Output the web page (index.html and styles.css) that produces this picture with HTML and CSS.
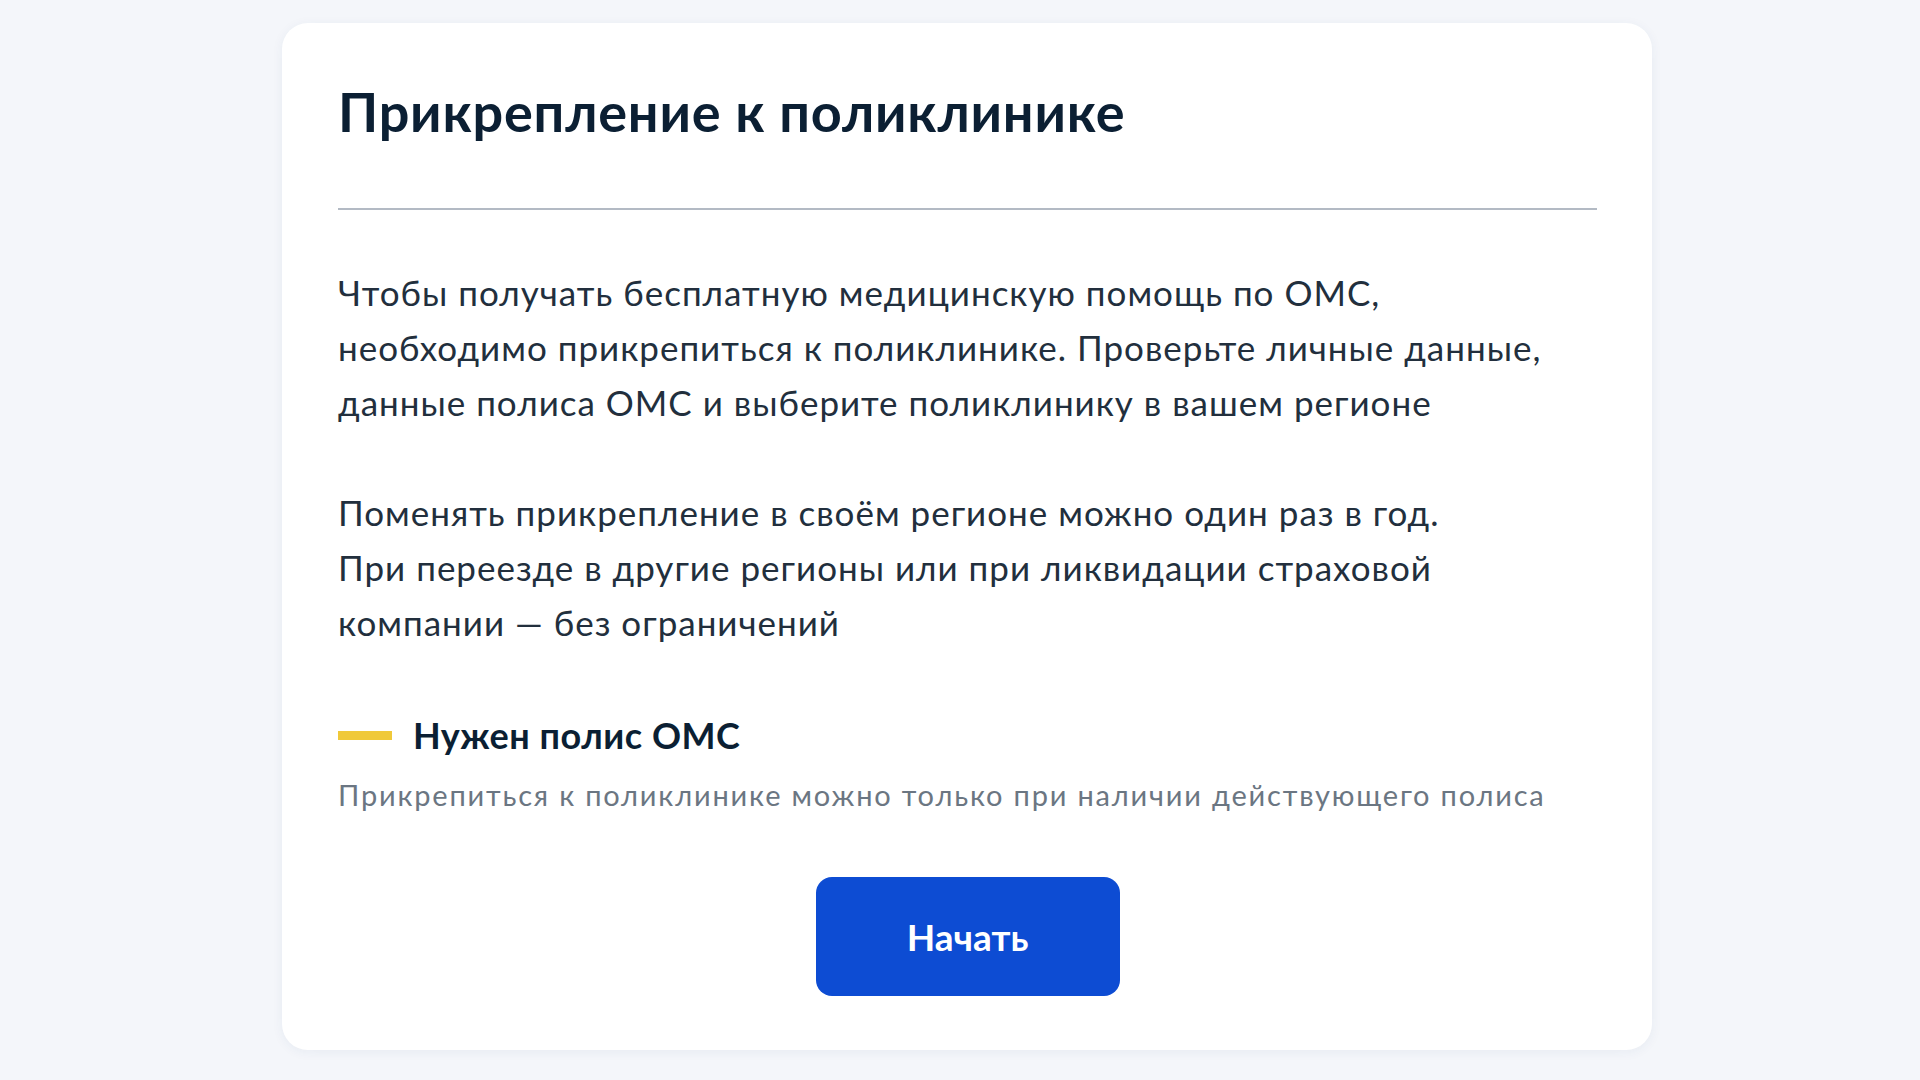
FILE: index.html
```html
<!DOCTYPE html>
<html>
	<head>
		<meta charset="UTF-8">
		<title>Прикрепление к поликлинике</title>
		<link rel="stylesheet" href="styles.css">
	</head>
	<body>
		<div class="page">
			<div class="card">
				<h1 class="title">Прикрепление к поликлинике</h1>
				<div class="divider"></div>
				<p class="text">Чтобы получать бесплатную медицинскую помощь по ОМС,<br>необходимо прикрепиться к поликлинике. Проверьте личные данные,<br>данные полиса ОМС и выберите поликлинику в вашем регионе</p>
				<p class="text">Поменять прикрепление в своём регионе можно один раз в год.<br>При переезде в другие регионы или при ликвидации страховой<br>компании — без ограничений</p>
				<div class="note">
					<div class="note-head">
						<span class="note-bar"></span>
						<span class="note-title">Нужен полис ОМС</span>
					</div>
					<div class="note-text">Прикрепиться к поликлинике можно только при наличии действующего полиса</div>
				</div>
				<div class="actions">
					<button class="btn">Начать</button>
				</div>
			</div>
		</div>
	</body>
</html>
```

FILE: styles.css
```css
*{
	margin: 0;
	padding: 0;
	box-sizing: border-box;
}
body{
	background-color: #f4f6fa;
	font-family: Lato, "Noto Sans", sans-serif;
	color: #0b1f33;
}
.page{
	padding: 23px 0 30px 282px;
}
.card{
	width: 1370px;
	background-color: #fff;
	border-radius: 26px;
	box-shadow: 0 2px 12px rgba(30, 60, 120, 0.06);
	padding: 57px 55px 54px 56px;
}
.title{
	font-size: 54px;
	font-weight: 700;
	line-height: 64px;
	letter-spacing: 0.8px;
	color: #0b1f33;
}
.divider{
	height: 2px;
	background-color: #b3bac4;
	margin-top: 64px;
	margin-bottom: 55px;
}
.text{
	font-size: 35px;
	line-height: 55px;
	letter-spacing: 1px;
	color: #222f3d;
	margin-bottom: 55px;
}
.note{
	margin-top: 63px;
}
.note-head{
	display: flex;
	align-items: center;
	gap: 21px;
}
.note-bar{
	width: 54px;
	height: 9px;
	background-color: #f0c93a;
}
.note-title{
	font-size: 36px;
	font-weight: 700;
	line-height: 44px;
	letter-spacing: 0.5px;
}
.note-text{
	margin-top: 18px;
	font-size: 29px;
	line-height: 40px;
	letter-spacing: 1.8px;
	color: #6b7682;
}
.actions{
	display: flex;
	justify-content: center;
	margin-top: 62px;
}
.btn{
	width: 304px;
	height: 119px;
	border: none;
	border-radius: 16px;
	background-color: #0d4cd3;
	color: #fff;
	font-family: Lato, "Noto Sans", sans-serif;
	font-size: 37px;
	font-weight: 700;
	cursor: pointer;
}
```
